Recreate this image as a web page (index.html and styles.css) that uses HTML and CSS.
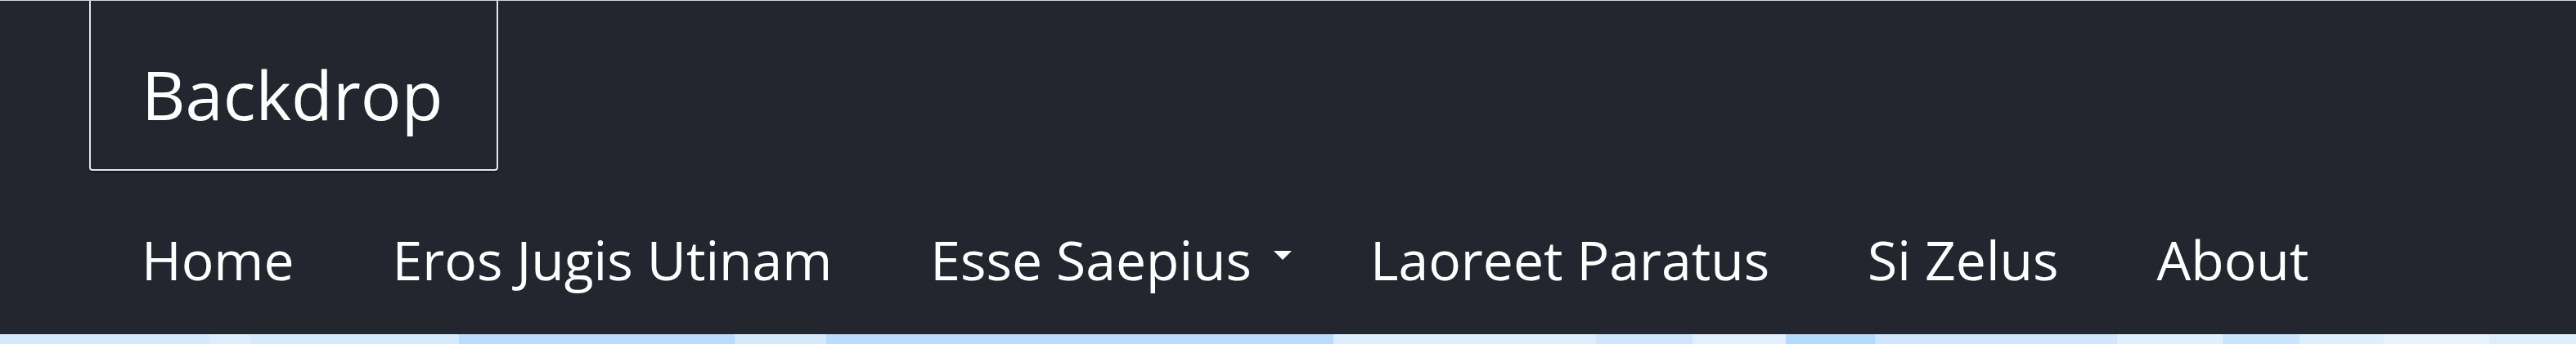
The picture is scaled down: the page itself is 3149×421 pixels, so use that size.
FILE: index.html
```html
<!DOCTYPE html>
<html lang="en">
<head>
  <meta charset="UTF-8">
  <meta name="viewport" content="width=device-width, initial-scale=1.0">
  <title>Backdrop</title>
  <link rel="stylesheet" href="styles.css">
</head>
<body>
  <header class="site-header">
    <div class="header-inner">
      <a class="site-name" href="#">Backdrop</a>
    </div>
    <nav class="main-menu">
      <ul>
        <li><a href="#">Home</a></li>
        <li><a href="#">Eros Jugis Utinam</a></li>
        <li class="has-children"><a href="#">Esse Saepius<span class="caret"></span></a></li>
        <li><a href="#">Laoreet Paratus</a></li>
        <li><a href="#">Si Zelus</a></li>
        <li><a href="#">About</a></li>
      </ul>
    </nav>
  </header>
  <div class="hero"></div>
</body>
</html>
```

FILE: styles.css
```css
html, body {
  height: 100%;
}
body {
  margin: 0;
  font-family: "Open Sans", "Noto Sans", sans-serif;
  color: #ffffff;
  display: flex;
  flex-direction: column;
  background-color: #d4e9fd;
}
a {
  color: #ffffff;
  text-decoration: none;
}
.site-header {
  background-color: #23262f;
  border-top: 1px solid #d4d4d6;
  height: 409px;
  box-sizing: border-box;
  padding: 0 109px;
}
.header-inner {
  display: flex;
}
.site-name {
  display: block;
  width: 372px;
  padding: 64px 62px 42px;
  border: 2px solid #e6e6e8;
  border-top: none;
  border-radius: 0 0 4px 4px;
  box-shadow: 0 2px 0 #15171c;
  font-size: 83px;
  line-height: 1.2;
}
.main-menu ul {
  display: flex;
  margin: 60px 0 0 4px;
  padding: 0;
  list-style: none;
}
.main-menu a {
  display: flex;
  align-items: center;
  padding: 0 60px;
  font-size: 66px;
  line-height: 96px;
}
.caret {
  display: block;
  width: 0;
  height: 0;
  margin: 0 -24px 0 27px;
  border-top: 11px solid #ffffff;
  border-left: 11px solid transparent;
  border-right: 11px solid transparent;
  position: relative;
  top: -4px;
}
.hero {
  flex: 1;
  background: linear-gradient(to right,
    #d3e8fc 0, #d3e8fc 255px,
    #dcedfe 255px, #dcedfe 306px,
    #d6eafd 306px, #d6eafd 561px,
    #b8dcfd 561px, #b8dcfd 898px,
    #d5e9fd 898px, #d5e9fd 1010px,
    #b9dcfd 1010px, #b9dcfd 1630px,
    #ddeffe 1630px, #ddeffe 1951px,
    #cde6fd 1951px, #cde6fd 2069px,
    #e0f0fe 2069px, #e0f0fe 2183px,
    #b3d9fc 2183px, #b3d9fc 2292px,
    #cfe6fd 2292px, #cfe6fd 2588px,
    #def0fe 2588px, #def0fe 2717px,
    #cbe4fd 2717px, #cbe4fd 2811px,
    #ddeffe 2811px, #ddeffe 2914px,
    #e6f3ff 2914px, #e6f3ff 3043px,
    #dbeefe 3043px);
}
```
